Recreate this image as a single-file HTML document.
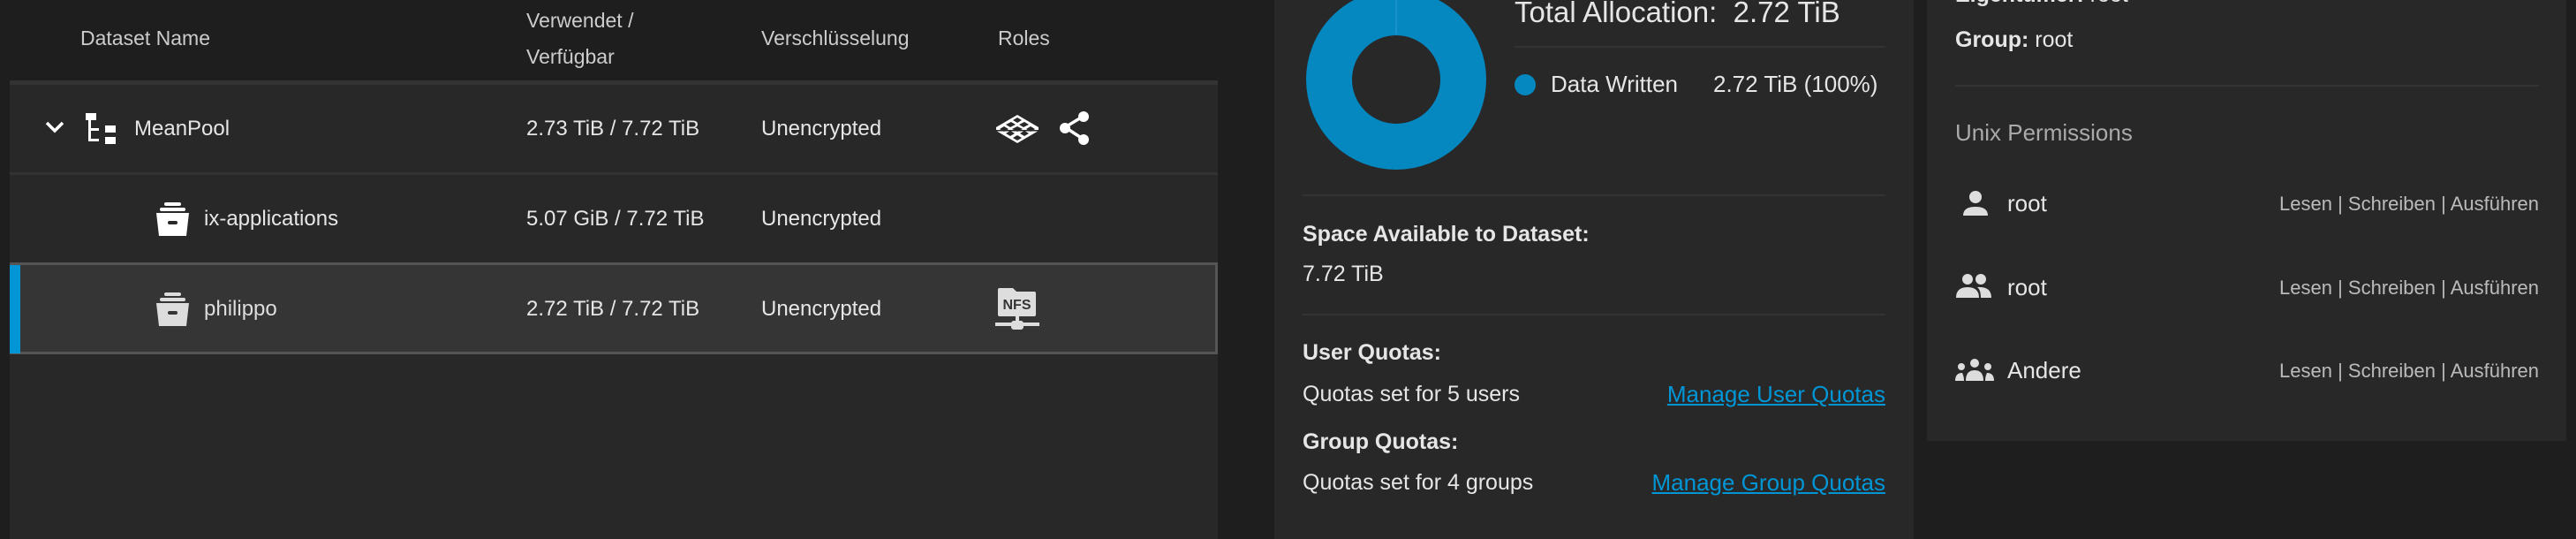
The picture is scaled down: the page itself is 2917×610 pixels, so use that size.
<!DOCTYPE html>
<html><head><meta charset="utf-8"><style>
*{margin:0;padding:0;box-sizing:border-box}
body{width:2917px;height:610px;background:#1e1e1e;font-family:"Liberation Sans",sans-serif;color:#e6e6e6;position:relative;overflow:hidden}
.a{position:absolute;white-space:nowrap}
.hd{font-size:23px;color:#ccc}
.rt{font-size:24px;color:#e6e6e6}
.lk{color:#0095d5;text-decoration:underline;font-size:26px}
</style></head><body>
<div class="a" style="left:11px;top:0;width:1368px;height:610px;background:#282828"></div>
<div class="a" style="left:0;top:0;width:1379px;height:92px;background:#1e1e1e"></div>
<div class="a hd" style="left:91px;top:30px">Dataset Name</div>
<div class="a hd" style="left:596px;top:3px;line-height:41px">Verwendet /<br>Verfügbar</div>
<div class="a hd" style="left:862px;top:30px">Verschlüsselung</div>
<div class="a hd" style="left:1130px;top:30px">Roles</div>
<div class="a" style="left:11px;top:91px;width:1368px;height:5px;background:#333"></div>
<div class="a" style="left:11px;top:195px;width:1368px;height:3px;background:#333"></div>
<div class="a" style="left:11px;top:297px;width:1368px;height:104px;background:#353535;border:3px solid #555;border-left:none"></div>
<div class="a" style="left:11px;top:300px;width:12px;height:100px;background:#0095d5"></div>

<svg class="a" style="left:50px;top:135px" width="24" height="18" viewBox="0 0 24 18"><path d="M3 4 L12 13 L21 4" stroke="#fff" stroke-width="3.5" fill="none"/></svg>
<svg class="a" style="left:97px;top:128px" width="37" height="36" viewBox="0 0 37 36"><rect x="0" y="0" width="12" height="8" fill="#fff"/><rect x="3" y="8" width="3" height="24" fill="#fff"/><rect x="3" y="17" width="12" height="3" fill="#fff"/><rect x="3" y="29" width="12" height="3" fill="#fff"/><rect x="22" y="14" width="12" height="8" fill="#fff"/><rect x="22" y="27" width="12" height="8" fill="#fff"/></svg>
<div class="a rt" style="left:152px;top:132px">MeanPool</div>
<div class="a rt" style="left:596px;top:132px">2.73 TiB / 7.72 TiB</div>
<div class="a rt" style="left:862px;top:132px">Unencrypted</div>
<svg class="a" style="left:1127px;top:129px" width="50" height="34" viewBox="0 0 50 34"><path d="M25 1 L49 15 L49 19 L25 33 L1 19 L1 15 Z" fill="#fff"/><g fill="#282828"><path d="M12 12 L18 9 L23 12 L17 15Z"/><path d="M27 12 L33 9 L38 12 L32 15Z"/><path d="M19 17 L25 14 L31 17 L25 20Z"/><path d="M20 7 L25 4 L30 7 L25 10Z"/><path d="M5 17 L10 14 L15 17 L10 20Z"/><path d="M35 17 L40 14 L45 17 L40 20Z"/><path d="M12 22 L17 19 L22 22 L17 25Z"/><path d="M28 22 L33 19 L38 22 L33 25Z"/><path d="M20 27 L25 24 L30 27 L25 30Z"/><rect x="1" y="18" width="48" height="1.5"/></g></svg>
<svg class="a" style="left:1196px;top:125px" width="40" height="42" viewBox="0 0 40 42"><path d="M30 7 L10 19 L30 32" stroke="#fff" stroke-width="3.5" fill="none"/><circle cx="31" cy="7" r="6" fill="#fff"/><circle cx="10" cy="20" r="6" fill="#fff"/><circle cx="31" cy="33" r="6" fill="#fff"/></svg>

<svg class="a" style="left:177px;top:229px" width="37" height="38" viewBox="0 0 37 38"><rect x="9" y="0" width="19" height="4" rx="2" fill="#fff"/><rect x="4" y="6" width="29" height="4" rx="2" fill="#fff"/><path d="M0 12 H37 L34 38 H3 Z" fill="#fff"/><rect x="13" y="21" width="11" height="4" rx="2" fill="#282828"/></svg>
<div class="a rt" style="left:231px;top:234px">ix-applications</div>
<div class="a rt" style="left:596px;top:234px">5.07 GiB / 7.72 TiB</div>
<div class="a rt" style="left:862px;top:234px">Unencrypted</div>

<svg class="a" style="left:177px;top:331px" width="37" height="38" viewBox="0 0 37 38"><rect x="9" y="0" width="19" height="4" rx="2" fill="#ddd"/><rect x="4" y="6" width="29" height="4" rx="2" fill="#ddd"/><path d="M0 12 H37 L34 38 H3 Z" fill="#ddd"/><rect x="13" y="21" width="11" height="4" rx="2" fill="#353535"/></svg>
<div class="a rt" style="left:231px;top:336px;color:#ddd">philippo</div>
<div class="a rt" style="left:596px;top:336px">2.72 TiB / 7.72 TiB</div>
<div class="a rt" style="left:862px;top:336px">Unencrypted</div>
<svg class="a" style="left:1127px;top:326px" width="50" height="48" viewBox="0 0 50 48"><path d="M3 2 Q3 0 5 0 H20 L24 4 H44 Q46 4 46 6 V30 Q46 32 44 32 H5 Q3 32 3 30 Z" fill="#ddd"/><text x="24.5" y="24" font-family="Liberation Sans,sans-serif" font-size="16" font-weight="bold" text-anchor="middle" fill="#353535">NFS</text><rect x="23" y="32" width="4" height="8" fill="#ddd"/><rect x="0" y="39" width="50" height="4" fill="#ddd"/><rect x="18" y="37" width="14" height="10" rx="3" fill="#ddd"/></svg>

<div class="a" style="left:1443px;top:0;width:724px;height:610px;background:#282828"></div>
<svg class="a" style="left:1478px;top:-13px" width="206" height="206" viewBox="0 0 206 206"><circle cx="103" cy="103" r="76" fill="none" stroke="#0587c0" stroke-width="52"/><line x1="103" y1="0" x2="103" y2="52" stroke="#2a9bd0" stroke-width="1"/></svg>
<div class="a" style="left:1715px;top:-5px;font-size:33px;color:#e6e6e6">Total Allocation:&nbsp; 2.72 TiB</div>
<div class="a" style="left:1715px;top:52px;width:420px;height:2px;background:#333"></div>
<div class="a" style="left:1715px;top:84px;width:24px;height:24px;border-radius:50%;background:#0587c0"></div>
<div class="a" style="left:1756px;top:80px;font-size:26px">Data Written</div>
<div class="a" style="left:1940px;top:80px;font-size:26px">2.72 TiB (100%)</div>
<div class="a" style="left:1475px;top:220px;width:660px;height:2px;background:#333"></div>
<div class="a" style="left:1475px;top:251px;font-size:25px;font-weight:bold">Space Available to Dataset:</div>
<div class="a" style="left:1475px;top:296px;font-size:25px">7.72 TiB</div>
<div class="a" style="left:1475px;top:355px;width:660px;height:2px;background:#333"></div>
<div class="a" style="left:1475px;top:385px;font-size:25px;font-weight:bold">User Quotas:</div>
<div class="a" style="left:1475px;top:432px;font-size:25px">Quotas set for 5 users</div>
<div class="a lk" style="right:782px;top:431px">Manage User Quotas</div>
<div class="a" style="left:1475px;top:486px;font-size:25px;font-weight:bold">Group Quotas:</div>
<div class="a" style="left:1475px;top:532px;font-size:25px">Quotas set for 4 groups</div>
<div class="a lk" style="right:782px;top:531px">Manage Group Quotas</div>

<div class="a" style="left:2182px;top:0;width:724px;height:499px;background:#282828"></div>
<div class="a" style="left:2214px;top:-20px;font-size:25px;font-weight:bold">Eigentümer: <span style="font-weight:normal">root</span></div>
<div class="a" style="left:2214px;top:31px;font-size:25px;font-weight:bold">Group: <span style="font-weight:normal">root</span></div>
<div class="a" style="left:2214px;top:96px;width:661px;height:2px;background:#333"></div>
<div class="a" style="left:2214px;top:135px;font-size:26px;color:#aaa">Unix Permissions</div>

<svg class="a" style="left:2222px;top:216px" width="30" height="30" viewBox="0 0 30 30"><circle cx="15" cy="7" r="7" fill="#ddd"/><path d="M1 28 Q1 18 15 18 Q29 18 29 28 Z" fill="#ddd"/></svg>
<div class="a" style="left:2273px;top:215px;font-size:26px">root</div>
<div class="a" style="right:42px;top:218px;font-size:22px;color:#bbb">Lesen | Schreiben | Ausführen</div>

<svg class="a" style="left:2215px;top:310px" width="42" height="28" viewBox="0 0 42 28"><circle cx="13" cy="6" r="6" fill="#ddd"/><circle cx="28" cy="6" r="6" fill="#ddd"/><path d="M0 27 Q0 15 13 15 Q26 15 26 27Z" fill="#ddd"/><path d="M28 27 Q28 18 24 15 Q40 14 40 27Z" fill="#ddd"/></svg>
<div class="a" style="left:2273px;top:310px;font-size:26px">root</div>
<div class="a" style="right:42px;top:313px;font-size:22px;color:#bbb">Lesen | Schreiben | Ausführen</div>

<svg class="a" style="left:2214px;top:406px" width="44" height="26" viewBox="0 0 44 26"><circle cx="22" cy="5" r="5" fill="#ddd"/><circle cx="7" cy="9" r="4" fill="#ddd"/><circle cx="37" cy="9" r="4" fill="#ddd"/><path d="M12 25 Q12 13 22 13 Q32 13 32 25Z" fill="#ddd"/><path d="M0 25 Q0 16 8 16 Q10 20 10 25Z" fill="#ddd"/><path d="M44 25 Q44 16 36 16 Q34 20 34 25Z" fill="#ddd"/></svg>
<div class="a" style="left:2273px;top:404px;font-size:26px">Andere</div>
<div class="a" style="right:42px;top:407px;font-size:22px;color:#bbb">Lesen | Schreiben | Ausführen</div>
</body></html>
